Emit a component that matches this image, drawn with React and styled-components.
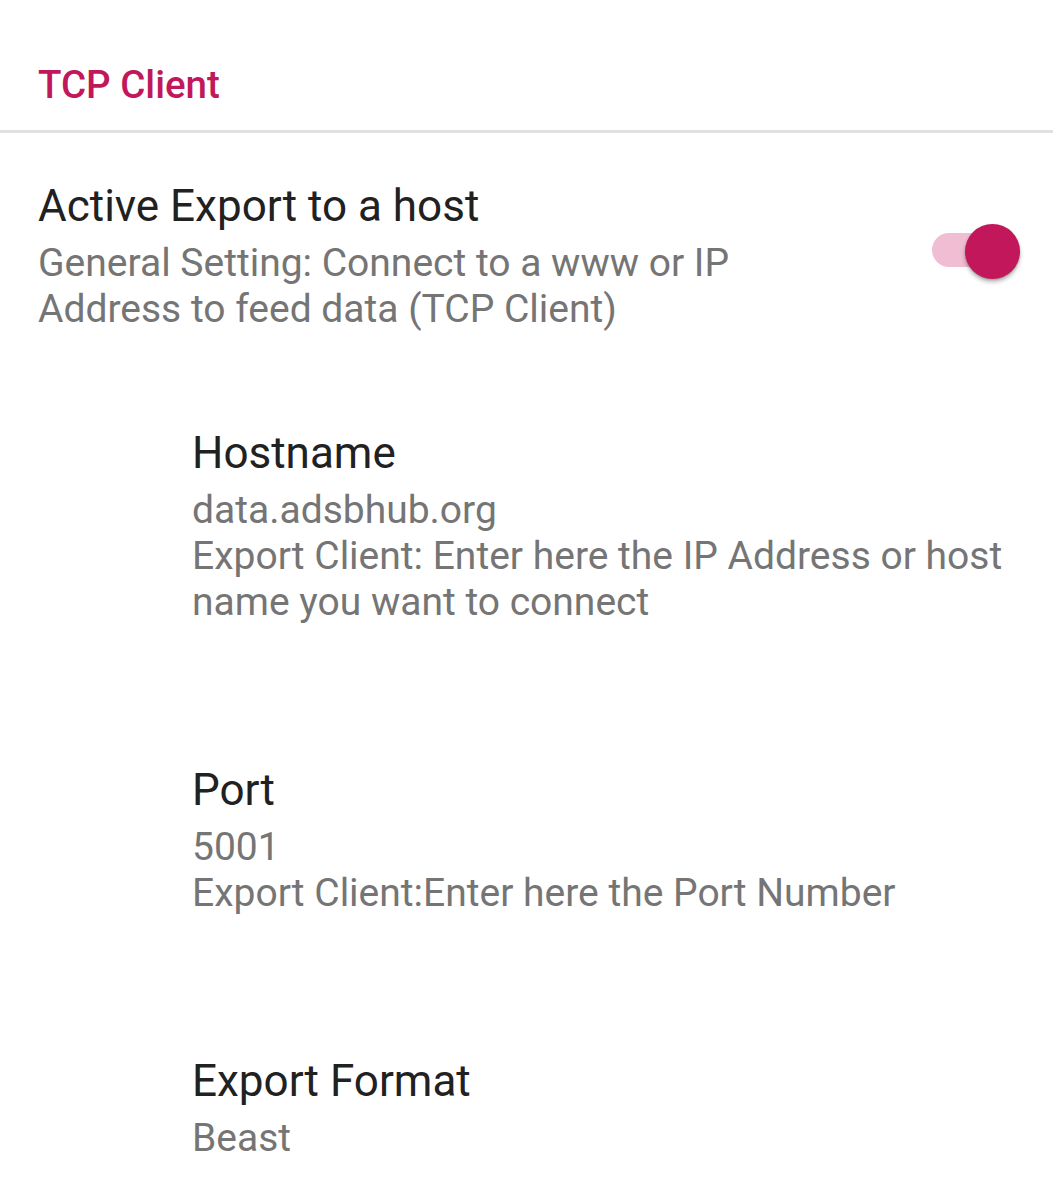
import styled, { createGlobalStyle } from "styled-components";

const GlobalStyle = createGlobalStyle`
  body {
    margin: 0;
    background: #ffffff;
    font-family: Roboto, "Noto Sans", "Liberation Sans", sans-serif;
  }
`;

const Screen = styled.div`
  width: 1053px;
  height: 1181px;
  background: #ffffff;
  overflow: hidden;
`;

const CategoryHeader = styled.div`
  height: 133px;
  box-sizing: border-box;
  padding: 62px 38px 0;
  border-bottom: 3px solid #e0e0e0;
  color: #c2185b;
  font-size: 38.5px;
  font-weight: 500;
  line-height: 1.172;
`;

const PrefRow = styled.div`
  display: flex;
  align-items: flex-start;
  gap: 20px;
  padding: 47px 33px ${(p) => p.$bottom}px ${(p) => (p.$indent ? 192 : 38)}px;
`;

const PrefText = styled.div`
  flex: 1;
  min-width: 0;
  max-width: ${(p) => p.$maxWidth || "none"};
`;

const Title = styled.div`
  color: #212121;
  font-size: 44px;
  line-height: 52px;
`;

const Summary = styled.div`
  margin-top: 8px;
  color: #757575;
  font-size: 39px;
  line-height: 46px;
`;

const SwitchBox = styled.div`
  position: relative;
  flex-shrink: 0;
  width: 88px;
  height: 55px;
  margin-top: 44px;
  margin-left: auto;
`;

const Track = styled.div`
  position: absolute;
  left: 0;
  right: 0;
  top: 9px;
  height: 34px;
  border-radius: 17px;
  background: ${(p) => (p.$on ? "#f0bdd2" : "#bdbdbd")};
`;

const Thumb = styled.div`
  position: absolute;
  top: 0;
  ${(p) => (p.$on ? "right: 0;" : "left: 0;")}
  width: 55px;
  height: 55px;
  border-radius: 50%;
  background: ${(p) => (p.$on ? "#c2185b" : "#fafafa")};
  box-shadow: 0 3px 4px rgba(0, 0, 0, 0.28), 0 1px 2px rgba(0, 0, 0, 0.16);
`;

const Switch = ({ on }) => (
  <SwitchBox>
    <Track $on={on} />
    <Thumb $on={on} />
  </SwitchBox>
);

const prefs = [
  {
    title: "Hostname",
    lines: [
      "data.adsbhub.org",
      "Export Client: Enter here the IP Address or host name you want to connect",
    ],
  },
  {
    title: "Port",
    lines: ["5001", "Export Client:Enter here the Port Number"],
  },
  {
    title: "Export Format",
    lines: ["Beast"],
  },
];

export default function App() {
  return (
    <Screen>
      <GlobalStyle />
      <CategoryHeader>TCP Client</CategoryHeader>

      <PrefRow $bottom={48}>
        <PrefText $maxWidth="740px">
          <Title>Active Export to a host</Title>
          <Summary>
            General Setting: Connect to a www or IP Address to feed data (TCP
            Client)
          </Summary>
        </PrefText>
        <Switch on />
      </PrefRow>

      {prefs.map((pref) => (
        <PrefRow key={pref.title} $indent $bottom={92}>
          <PrefText>
            <Title>{pref.title}</Title>
            <Summary>
              {pref.lines.map((line) => (
                <div key={line}>{line}</div>
              ))}
            </Summary>
          </PrefText>
        </PrefRow>
      ))}
    </Screen>
  );
}
